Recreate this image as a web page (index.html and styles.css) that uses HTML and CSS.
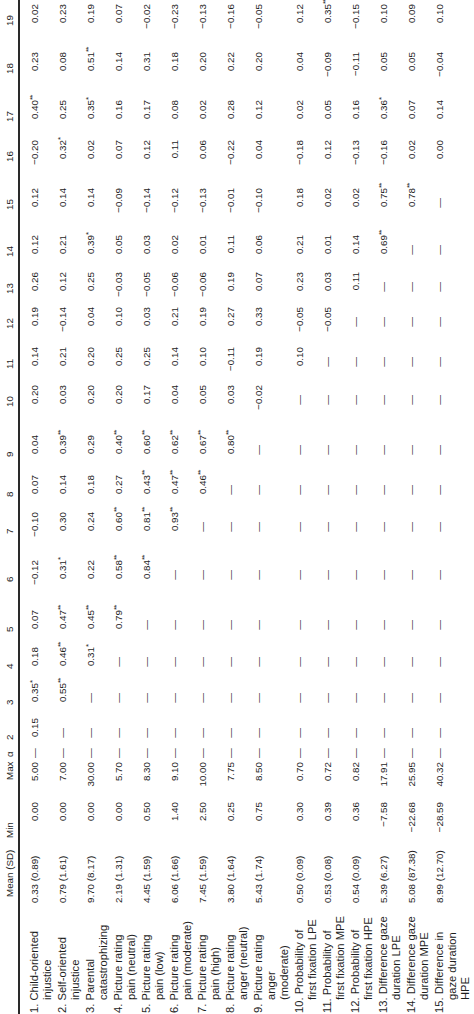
FILE: index.html
```html
<!DOCTYPE html>
<html lang="en">
<head>
<meta charset="utf-8">
<title>Correlation table</title>
<link rel="stylesheet" href="styles.css">
</head>
<body>
<div class="page">
  <div class="sheet">
    <div class="row head">
      <div class="lab"></div>
      <div class="hmean">Mean (SD)</div>
      <div class="hmin">Min</div>
      <div class="hmax">Max</div>
      <div class="hal">α</div>
      <div class="hc"><span>2</span></div>
      <div class="hc"><span>3</span></div>
      <div class="hc"><span>4</span></div>
      <div class="hc"><span>5</span></div>
      <div class="hc"><span>6</span></div>
      <div class="hc"><span>7</span></div>
      <div class="hc"><span>8</span></div>
      <div class="hc"><span>9</span></div>
      <div class="hc"><span>10</span></div>
      <div class="hc"><span>11</span></div>
      <div class="hc"><span>12</span></div>
      <div class="hc"><span>13</span></div>
      <div class="hc"><span>14</span></div>
      <div class="hc"><span>15</span></div>
      <div class="hc"><span>16</span></div>
      <div class="hc"><span>17</span></div>
      <div class="hc"><span>18</span></div>
      <div class="hc"><span>19</span></div>
    </div>

    <div class="body">
      <div class="row">
        <div class="lab">1. Child-oriented<br>injustice</div>
        <div class="mean">0.33 (0.89)</div><div class="mm">0.00</div><div class="mm">5.00</div><div class="al">—</div>
        <div class="c">0.15</div><div class="c">0.35<sup>*</sup></div><div class="c">0.18</div><div class="c">0.07</div><div class="c">−0.12</div><div class="c">−0.10</div><div class="c">0.07</div><div class="c">0.04</div><div class="c">0.20</div><div class="c">0.14</div><div class="c">0.19</div><div class="c">0.26</div><div class="c">0.12</div><div class="c">0.12</div><div class="c">−0.20</div><div class="c">0.40<sup>**</sup></div><div class="c">0.23</div><div class="c">0.02</div>
      </div>
      <div class="row">
        <div class="lab">2. Self-oriented<br>injustice</div>
        <div class="mean">0.79 (1.61)</div><div class="mm">0.00</div><div class="mm">7.00</div><div class="al">—</div>
        <div class="c d">—</div><div class="c">0.55<sup>**</sup></div><div class="c">0.46<sup>**</sup></div><div class="c">0.47<sup>**</sup></div><div class="c">0.31<sup>*</sup></div><div class="c">0.30</div><div class="c">0.14</div><div class="c">0.39<sup>**</sup></div><div class="c">0.03</div><div class="c">0.21</div><div class="c">−0.14</div><div class="c">0.12</div><div class="c">0.21</div><div class="c">0.14</div><div class="c">0.32<sup>*</sup></div><div class="c">0.25</div><div class="c">0.08</div><div class="c">0.23</div>
      </div>
      <div class="row">
        <div class="lab">3. Parental<br>catastrophizing</div>
        <div class="mean">9.70 (8.17)</div><div class="mm">0.00</div><div class="mm">30.00</div><div class="al">—</div>
        <div class="c d">—</div><div class="c d">—</div><div class="c">0.31<sup>*</sup></div><div class="c">0.45<sup>**</sup></div><div class="c">0.22</div><div class="c">0.24</div><div class="c">0.18</div><div class="c">0.29</div><div class="c">0.20</div><div class="c">0.20</div><div class="c">0.04</div><div class="c">0.25</div><div class="c">0.39<sup>*</sup></div><div class="c">0.14</div><div class="c">0.02</div><div class="c">0.35<sup>*</sup></div><div class="c">0.51<sup>**</sup></div><div class="c">0.19</div>
      </div>
      <div class="row">
        <div class="lab">4. Picture rating<br>pain (neutral)</div>
        <div class="mean">2.19 (1.31)</div><div class="mm">0.00</div><div class="mm">5.70</div><div class="al">—</div>
        <div class="c d">—</div><div class="c d">—</div><div class="c d">—</div><div class="c">0.79<sup>**</sup></div><div class="c">0.58<sup>**</sup></div><div class="c">0.60<sup>**</sup></div><div class="c">0.27</div><div class="c">0.40<sup>**</sup></div><div class="c">0.20</div><div class="c">0.25</div><div class="c">0.10</div><div class="c">−0.03</div><div class="c">0.05</div><div class="c">−0.09</div><div class="c">0.07</div><div class="c">0.16</div><div class="c">0.14</div><div class="c">0.07</div>
      </div>
      <div class="row">
        <div class="lab">5. Picture rating<br>pain (low)</div>
        <div class="mean">4.45 (1.59)</div><div class="mm">0.50</div><div class="mm">8.30</div><div class="al">—</div>
        <div class="c d">—</div><div class="c d">—</div><div class="c d">—</div><div class="c d">—</div><div class="c">0.84<sup>**</sup></div><div class="c">0.81<sup>**</sup></div><div class="c">0.43<sup>**</sup></div><div class="c">0.60<sup>**</sup></div><div class="c">0.17</div><div class="c">0.25</div><div class="c">0.03</div><div class="c">−0.05</div><div class="c">0.03</div><div class="c">−0.14</div><div class="c">0.12</div><div class="c">0.17</div><div class="c">0.31</div><div class="c">−0.02</div>
      </div>
      <div class="row">
        <div class="lab">6. Picture rating<br>pain (moderate)</div>
        <div class="mean">6.06 (1.66)</div><div class="mm">1.40</div><div class="mm">9.10</div><div class="al">—</div>
        <div class="c d">—</div><div class="c d">—</div><div class="c d">—</div><div class="c d">—</div><div class="c d">—</div><div class="c">0.93<sup>**</sup></div><div class="c">0.47<sup>**</sup></div><div class="c">0.62<sup>**</sup></div><div class="c">0.04</div><div class="c">0.14</div><div class="c">0.21</div><div class="c">−0.06</div><div class="c">0.02</div><div class="c">−0.12</div><div class="c">0.11</div><div class="c">0.08</div><div class="c">0.18</div><div class="c">−0.23</div>
      </div>
      <div class="row">
        <div class="lab">7. Picture rating<br>pain (high)</div>
        <div class="mean">7.45 (1.59)</div><div class="mm">2.50</div><div class="mm">10.00</div><div class="al">—</div>
        <div class="c d">—</div><div class="c d">—</div><div class="c d">—</div><div class="c d">—</div><div class="c d">—</div><div class="c d">—</div><div class="c">0.46<sup>**</sup></div><div class="c">0.67<sup>**</sup></div><div class="c">0.05</div><div class="c">0.10</div><div class="c">0.19</div><div class="c">−0.06</div><div class="c">0.01</div><div class="c">−0.13</div><div class="c">0.06</div><div class="c">0.02</div><div class="c">0.20</div><div class="c">−0.13</div>
      </div>
      <div class="row">
        <div class="lab">8. Picture rating<br>anger (neutral)</div>
        <div class="mean">3.80 (1.64)</div><div class="mm">0.25</div><div class="mm">7.75</div><div class="al">—</div>
        <div class="c d">—</div><div class="c d">—</div><div class="c d">—</div><div class="c d">—</div><div class="c d">—</div><div class="c d">—</div><div class="c d">—</div><div class="c">0.80<sup>**</sup></div><div class="c">0.03</div><div class="c">−0.11</div><div class="c">0.27</div><div class="c">0.19</div><div class="c">0.11</div><div class="c">−0.01</div><div class="c">−0.22</div><div class="c">0.28</div><div class="c">0.22</div><div class="c">−0.16</div>
      </div>
      <div class="row">
        <div class="lab">9. Picture rating<br>anger<br>(moderate)</div>
        <div class="mean">5.43 (1.74)</div><div class="mm">0.75</div><div class="mm">8.50</div><div class="al">—</div>
        <div class="c d">—</div><div class="c d">—</div><div class="c d">—</div><div class="c d">—</div><div class="c d">—</div><div class="c d">—</div><div class="c d">—</div><div class="c d">—</div><div class="c">−0.02</div><div class="c">0.19</div><div class="c">0.33</div><div class="c">0.07</div><div class="c">0.06</div><div class="c">−0.10</div><div class="c">0.04</div><div class="c">0.12</div><div class="c">0.20</div><div class="c">−0.05</div>
      </div>
      <div class="row">
        <div class="lab">10. Probability of<br>first fixation LPE</div>
        <div class="mean">0.50 (0.09)</div><div class="mm">0.30</div><div class="mm">0.70</div><div class="al">—</div>
        <div class="c d">—</div><div class="c d">—</div><div class="c d">—</div><div class="c d">—</div><div class="c d">—</div><div class="c d">—</div><div class="c d">—</div><div class="c d">—</div><div class="c d">—</div><div class="c">0.10</div><div class="c">−0.05</div><div class="c">0.23</div><div class="c">0.21</div><div class="c">0.18</div><div class="c">−0.18</div><div class="c">0.02</div><div class="c">0.04</div><div class="c">0.12</div>
      </div>
      <div class="row">
        <div class="lab">11. Probability of<br>first fixation MPE</div>
        <div class="mean">0.53 (0.08)</div><div class="mm">0.39</div><div class="mm">0.72</div><div class="al">—</div>
        <div class="c d">—</div><div class="c d">—</div><div class="c d">—</div><div class="c d">—</div><div class="c d">—</div><div class="c d">—</div><div class="c d">—</div><div class="c d">—</div><div class="c d">—</div><div class="c d">—</div><div class="c">−0.05</div><div class="c">0.03</div><div class="c">0.01</div><div class="c">0.02</div><div class="c">0.12</div><div class="c">0.05</div><div class="c">−0.09</div><div class="c">0.35<sup>**</sup></div>
      </div>
      <div class="row">
        <div class="lab">12. Probability of<br>first fixation HPE</div>
        <div class="mean">0.54 (0.09)</div><div class="mm">0.36</div><div class="mm">0.82</div><div class="al">—</div>
        <div class="c d">—</div><div class="c d">—</div><div class="c d">—</div><div class="c d">—</div><div class="c d">—</div><div class="c d">—</div><div class="c d">—</div><div class="c d">—</div><div class="c d">—</div><div class="c d">—</div><div class="c d">—</div><div class="c">0.11</div><div class="c">0.14</div><div class="c">0.02</div><div class="c">−0.13</div><div class="c">0.16</div><div class="c">−0.11</div><div class="c">−0.15</div>
      </div>
      <div class="row">
        <div class="lab">13. Difference gaze<br>duration LPE</div>
        <div class="mean">5.39 (6.27)</div><div class="mm">−7.58</div><div class="mm">17.91</div><div class="al">—</div>
        <div class="c d">—</div><div class="c d">—</div><div class="c d">—</div><div class="c d">—</div><div class="c d">—</div><div class="c d">—</div><div class="c d">—</div><div class="c d">—</div><div class="c d">—</div><div class="c d">—</div><div class="c d">—</div><div class="c d">—</div><div class="c">0.69<sup>**</sup></div><div class="c">0.75<sup>**</sup></div><div class="c">−0.16</div><div class="c">0.36<sup>*</sup></div><div class="c">0.05</div><div class="c">0.10</div>
      </div>
      <div class="row">
        <div class="lab">14. Difference gaze<br>duration MPE</div>
        <div class="mean">5.08 (87.38)</div><div class="mm">−22.68</div><div class="mm">25.95</div><div class="al">—</div>
        <div class="c d">—</div><div class="c d">—</div><div class="c d">—</div><div class="c d">—</div><div class="c d">—</div><div class="c d">—</div><div class="c d">—</div><div class="c d">—</div><div class="c d">—</div><div class="c d">—</div><div class="c d">—</div><div class="c d">—</div><div class="c d">—</div><div class="c">0.78<sup>**</sup></div><div class="c">0.02</div><div class="c">0.07</div><div class="c">0.05</div><div class="c">0.09</div>
      </div>
      <div class="row">
        <div class="lab">15. Difference in<br>gaze duration<br>HPE</div>
        <div class="mean">8.99 (12.70)</div><div class="mm">−28.59</div><div class="mm">40.32</div><div class="al">—</div>
        <div class="c d">—</div><div class="c d">—</div><div class="c d">—</div><div class="c d">—</div><div class="c d">—</div><div class="c d">—</div><div class="c d">—</div><div class="c d">—</div><div class="c d">—</div><div class="c d">—</div><div class="c d">—</div><div class="c d">—</div><div class="c d">—</div><div class="c d">—</div><div class="c">0.00</div><div class="c">0.14</div><div class="c">−0.04</div><div class="c">0.10</div>
      </div>
    </div>
  </div>
</div>
</body>
</html>
```

FILE: styles.css
```css
html, body {
  margin: 0;
  padding: 0;
  background: #ffffff;
  overflow: hidden;
}

.page {
  width: 474px;
  height: 1014px;
  overflow: hidden;
  position: relative;
}

/* the table is printed sideways: built 1014 wide x 474 tall, then turned a quarter counter-clockwise */
.sheet {
  width: 1014px;
  height: 474px;
  transform-origin: 0 0;
  transform: translateY(1014px) rotate(-90deg);
  font-family: "Liberation Sans", Arial, sans-serif;
  font-size: 9.8px;
  line-height: 13px;
  color: #1e1e1e;
  white-space: nowrap;
}

.row {
  display: grid;
  grid-template-columns: 111px 65px 40px 40px 18px 26px 35px 36px 37px 50px 48px 37px 40px 50px 38px 40px 35px 37px 47px 48px 40px 48px 48px;
  padding-top: 2px;
}

.head {
  padding-top: 3px;
  padding-bottom: 2px;
  border-bottom: 2px solid #2a2a2a;
}

.body {
  padding-top: 6px;
}

.lab {
  font-size: 11.2px;
  padding-left: 14px;
  text-indent: -13px;
}

.hmean { padding-left: 6px; }
.hmin { padding-left: 0; }
.hmax { padding-left: 18px; }
.hal { padding-left: 1px; }

.hc {
  text-align: right;
  padding-right: 4px;
}
.hc span {
  display: inline-block;
  width: 22px;
  text-align: left;
}

.mean { padding-left: 0; }

.mm {
  text-align: right;
  padding-right: 4px;
}

.al { padding-left: 0; }

.c {
  text-align: right;
  padding-right: 4px;
}

.c.d {
  padding-right: 14px;
}

sup {
  display: inline-block;
  width: 0;
  font-size: 8px;
  line-height: 0;
  vertical-align: 3px;
  letter-spacing: -0.8px;
}
```
